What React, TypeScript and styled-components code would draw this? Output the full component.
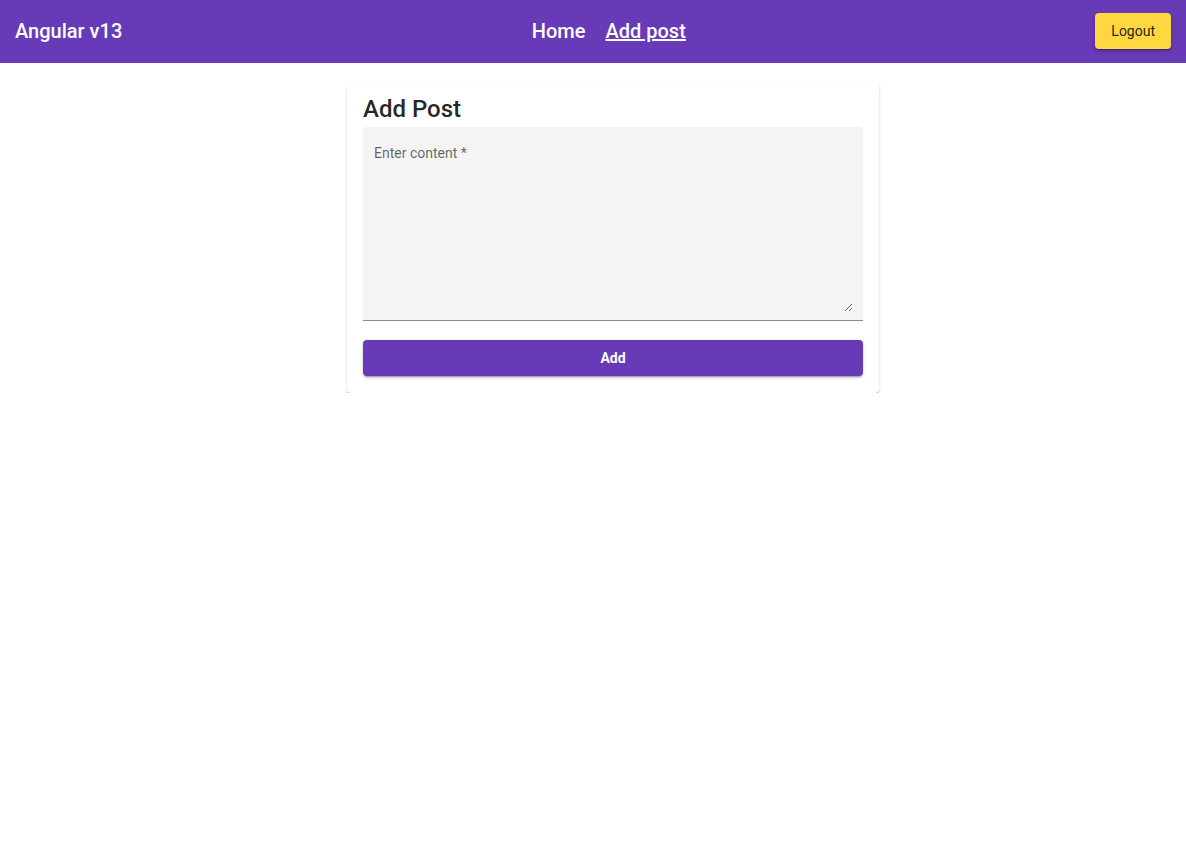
import styled, { createGlobalStyle } from 'styled-components'

const GlobalStyle = createGlobalStyle`
  html, body {
    margin: 0;
    padding: 0;
    background: #fff;
    font-family: Roboto, 'Helvetica Neue', sans-serif;
    color: rgba(0, 0, 0, 0.87);
  }
`

const Toolbar = styled.header`
  display: flex;
  align-items: center;
  height: 63px;
  padding: 0 15px 1px;
  box-sizing: border-box;
  background: #673ab7;
  color: #fff;
`

const Brand = styled.span`
  font-size: 20px;
  font-weight: 500;
`

const Spacer = styled.div`
  flex: 1;
`

const Nav = styled.nav`
  display: flex;
  gap: 20px;
`

const NavLink = styled.a<{ $active?: boolean }>`
  color: #fff;
  font-size: 20px;
  font-weight: 500;
  text-decoration: ${(p) => (p.$active ? 'underline' : 'none')};
  cursor: pointer;
`

const LogoutButton = styled.button`
  height: 36px;
  padding: 0 16px;
  border: none;
  border-radius: 4px;
  background: #ffd740;
  color: rgba(0, 0, 0, 0.87);
  font-family: inherit;
  font-size: 14px;
  font-weight: 400;
  box-shadow: 0 3px 1px -2px rgba(0, 0, 0, 0.2), 0 2px 2px 0 rgba(0, 0, 0, 0.14), 0 1px 5px 0 rgba(0, 0, 0, 0.12);
  cursor: pointer;
`

const Main = styled.main`
  display: flex;
  justify-content: center;
  padding: 20px 0 0 40px;
`

const Card = styled.section`
  width: 532px;
  box-sizing: border-box;
  padding: 12px 16px 17px;
  border-radius: 4px;
  background: #fff;
  box-shadow: 0 2px 1px -1px rgba(0, 0, 0, 0.25), 0 1px 1px 0 rgba(0, 0, 0, 0.16), 0 1px 3px 0 rgba(0, 0, 0, 0.12);
  display: flex;
  flex-direction: column;
`

const CardTitle = styled.h2`
  margin: 0 0 4px;
  font-size: 24px;
  line-height: 28px;
  font-weight: 500;
  color: rgba(0, 0, 0, 0.87);
`

const Field = styled.label`
  display: flex;
  flex-direction: column;
  height: 194px;
  box-sizing: border-box;
  padding: 18px 10px 8px 11px;
  border-radius: 4px 4px 0 0;
  background: #f4f4f4;
  border-bottom: 1px solid #8a8a8a;
`

const FieldLabel = styled.span`
  font-size: 14px;
  line-height: 16px;
  color: rgba(0, 0, 0, 0.6);
`

const TextArea = styled.textarea`
  flex: 1;
  margin-top: 2px;
  border: none;
  outline: none;
  background: transparent;
  resize: vertical;
  font-family: inherit;
  font-size: 14px;
  padding: 0;
`

const SubmitButton = styled.button`
  margin-top: 19px;
  height: 36px;
  border: none;
  border-radius: 4px;
  background: #673ab7;
  color: #fff;
  font-family: inherit;
  font-size: 14px;
  font-weight: 700;
  box-shadow: 0 3px 1px -2px rgba(0, 0, 0, 0.2), 0 2px 2px 0 rgba(0, 0, 0, 0.14), 0 1px 5px 0 rgba(0, 0, 0, 0.12);
  cursor: pointer;
`

export default function App() {
  return (
    <>
      <GlobalStyle />
      <Toolbar>
        <Brand>Angular v13</Brand>
        <Spacer />
        <Nav>
          <NavLink>Home</NavLink>
          <NavLink $active>Add post</NavLink>
        </Nav>
        <Spacer />
        <LogoutButton>Logout</LogoutButton>
      </Toolbar>
      <Main>
        <Card>
          <CardTitle>Add Post</CardTitle>
          <Field>
            <FieldLabel>Enter content *</FieldLabel>
            <TextArea />
          </Field>
          <SubmitButton>Add</SubmitButton>
        </Card>
      </Main>
    </>
  )
}
